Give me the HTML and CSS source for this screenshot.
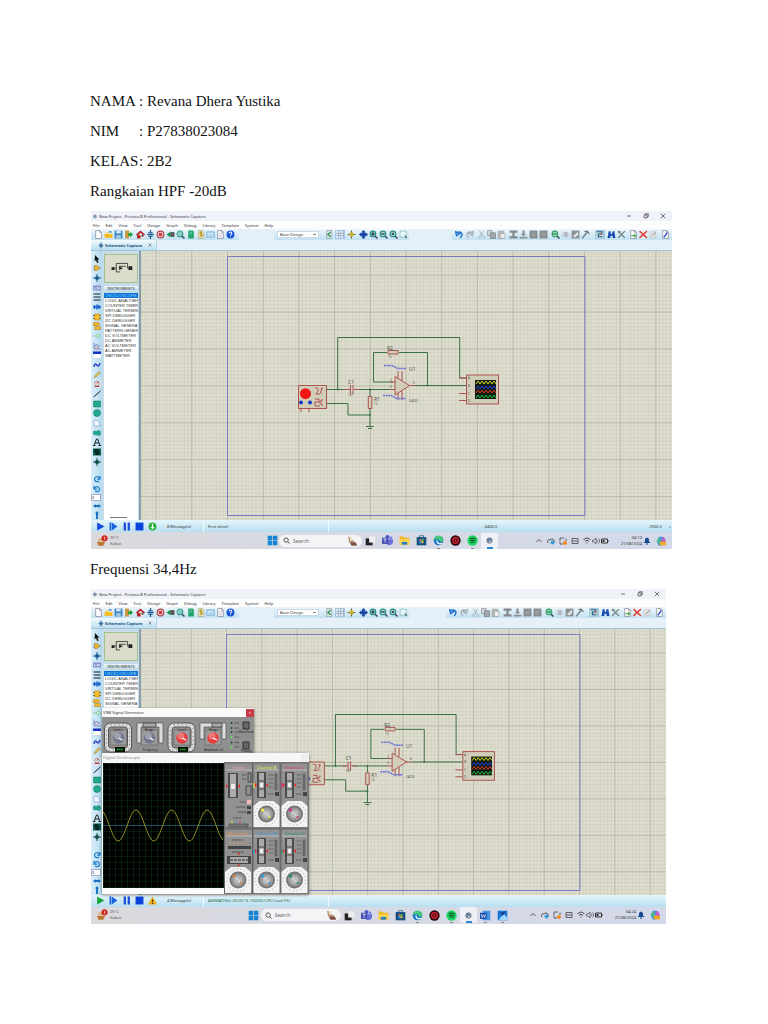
FILE: index.html
```html
<!DOCTYPE html>
<html lang="id">
<head>
<meta charset="utf-8">
<meta name="viewport" content="width=device-width, initial-scale=1">
<title>Rangkaian HPF -20dB</title>
<link rel="stylesheet" href="styles.css">
</head>
<body>
<main class="page">
  <p class="line"><span class="label">NAMA</span>: Revana Dhera Yustika</p>
  <p class="line"><span class="label">NIM</span>: P27838023084</p>
  <p class="line"><span class="label">KELAS</span>: 2B2</p>
  <p class="line">Rangkaian HPF -20dB</p>
  <figure class="shot" id="design"></figure>
  <p class="line">Frequensi 34,4Hz</p>
  <figure class="shot shot-small" id="running"></figure>
</main>
<script src="app.js"></script>
</body>
</html>
```

FILE: styles.css
```css
* { box-sizing: border-box; }
body { margin: 0; background: #fff; color: #111; font-family: "Liberation Serif", "Times New Roman", serif; }
button, input, select { font: inherit; color: inherit; border: 0; padding: 0; margin: 0; background: none; border-radius: 0; }
svg { display: block; }

.page { padding: 86px 96px 40px 90px; }
.line { margin: 0; font-size: 15px; line-height: 30px; }
.label { display: inline-block; min-width: 49px; }

.shot { margin: 5px 0 5px 1px; font: 4px/5px "Noto Sans", sans-serif; color: #333; background: #e8f2f9; overflow: hidden; }
.shot-small { margin-right: 6px; }

.titlebar { height: 10px; padding: 0 6px 0 2px; display: flex; align-items: center; gap: 2px; background: #f0f2fa; }
.titlebar svg { width: 4px; height: 5px; }
.window-buttons { margin-left: auto; display: flex; gap: 11px; }
.window-buttons svg { width: 6px; height: 6px; }

.menubar { height: 8px; padding-left: 2px; display: flex; align-items: center; gap: 6px; background: #fdfdfe; }

.toolbar { height: 11px; display: flex; align-items: center; background: #e4f0f8; }
.group { height: 11px; display: flex; align-items: center; background: linear-gradient(#edf6fc, #c3e1f2); }
.group button { width: 10px; }
.group svg { width: 9px; height: 9px; }
.group .gap { width: 2px; }
.group .wide { width: 4px; }
.group.first { padding-left: 3px; padding-right: 3px; }
.group.second { margin-left: 35px; padding: 0 0 0 3px; }
.group.third { padding-left: 6px; }
.group.last { margin-left: auto; padding-left: 3px; padding-right: 1px; }
.group .pressed { background: #d5e7f5; outline: 1px solid #a9c7de; outline-offset: -1px; }
.combo { width: 42px; height: 7px; padding: 0 2px; background: #fff; border: 1px solid #cbdbe6; appearance: none; font-size: 4px; line-height: 5px;
  background-image: linear-gradient(#888, #888); background-size: 3px 1px; background-position: right 2px center; background-repeat: no-repeat; }

.tabs { height: 11px; display: flex; align-items: end; background: #e6f0f8; border-bottom: 1px solid #9fc4da; }
.tab { height: 10px; width: 66px; padding: 0 4px 0 7px; display: flex; align-items: center; gap: 1px; color: #22507c; white-space: nowrap; background: linear-gradient(#f3fafe, #bcdff2); border-right: 1px solid #b3d4e6; }
.tab svg { width: 6px; height: 7px; flex: none; }
.tab button { margin-left: auto; }
.tab button svg { width: 4px; height: 4px; }

.workspace { position: relative; display: flex; }
.rail { width: 11px; flex: none; padding-top: 3px; display: flex; flex-direction: column; background: linear-gradient(90deg, #dceffa, #b4daee); }
.rail div { display: flex; flex-direction: column; }
.rail button { flex: 1; display: grid; place-items: center; min-height: 0; }
.rail svg { width: 8px; height: 8px; }
.rail .modes { flex: 22; margin-bottom: 8px; }
.rail .turns, .rail .flips { flex: 2; }
.rail .angle { width: 10px; height: 7px; background: #fff; border: 1px solid #aac; font-size: 4px; }

.side { width: 37px; flex: none; padding: 3px 1px 0 2px; display: flex; flex-direction: column; background: #c7dce8; }
.overview { height: 29px; flex: none; background: #dcdccb; border: 1px solid #7d8dd0; outline: 1px solid #9fc58e; outline-offset: -1px; }
.side h2 { margin: 3px 0 1px; height: 6px; font: 4px/6px "Noto Sans", sans-serif; text-align: center; background: linear-gradient(#edf6fb, #bcd8e8); flex: none; }
.parts { margin: 0; padding: 0 0 0 1px; list-style: none; flex: 1; background: #fff; white-space: nowrap; overflow: hidden; height: 0; position: relative; font-family: "Liberation Sans", sans-serif; }
.parts li { height: 5px; }
.parts .selected { margin-left: -1px; padding-left: 1px; background: #0b74d4; color: #9bd0ff; }
.parts::after { content: ""; position: absolute; left: 6px; bottom: 2px; width: 17px; height: 1px; background: #777; }

.canvas { flex: 1; min-width: 0; border-left: 2px solid #8a9fab; }
.canvas svg { width: 100%; height: auto; aspect-ratio: 531 / 269; }

.status { height: 12px; display: flex; align-items: center; background: linear-gradient(#e6f5fc, #b8def0); }
.status svg { width: 9px; height: 9px; }
.transport { display: flex; gap: 4px; padding-left: 5px; width: 76px; }
.messages { width: 36px; white-space: nowrap; }
.sheet { width: 126px; padding-left: 4px; height: 100%; display: flex; align-items: center; border-left: 1px solid #f4fbff; border-right: 1px solid #eefaff; white-space: nowrap; }
.running { color: #1d6a42; }
.coords { flex: 1; display: flex; justify-content: end; gap: 152px; padding-right: 1px; }
.coords span:last-child { margin-left: -145px; color: #3355bb; }

.taskbar { height: 17px; display: grid; grid-template-columns: 1fr auto 1fr; align-items: center; background: linear-gradient(90deg, #dadade, #d3d9ea); }
.weather { padding-left: 6px; display: flex; gap: 2px; align-items: center; line-height: 6px; color: #555; }
.weather svg { width: 11px; height: 12px; }
.apps { display: flex; align-items: center; }
.apps button { width: 17px; height: 16px; display: grid; place-items: center; border-radius: 2px; position: relative; }
.apps button svg { width: 11px; height: 11px; }
.apps .start { width: 14px; }
.apps .open::after { content: ""; position: absolute; bottom: 0; left: 7px; width: 3px; height: 1px; background: #888; }
.apps .active { background: #eef0f5; }
.apps .active svg { width: 7px; height: 7px; }
.apps .active::after { content: ""; position: absolute; bottom: 0; left: 6px; width: 6px; height: 2px; background: #2b84d4; }
.search { width: 83px; height: 12px; border-radius: 6px; background: #f4f4f7; display: flex; align-items: center; gap: 3px; padding: 0 4px; font-size: 5px; }
.shot-small .search { width: 80px; }
.search svg { width: 7px; height: 7px; flex: none; }
.search svg:last-child { width: 12px; height: 10px; }
.search input { flex: 1; width: 0; min-width: 0; outline: 0; }
.search input::placeholder { color: #666; opacity: 1; }
.tray { display: flex; justify-content: end; align-items: center; gap: 4px; padding-right: 6px; }
.tray svg { width: 8px; height: 8px; }
.tray .tight { margin-left: -3px; }
.tray time { width: 26px; text-align: right; line-height: 6px; white-space: nowrap; margin-left: 3px; margin-right: -3px; }
.tray svg.copilot { width: 10px; height: 10px; margin-left: 1px; }

.window { position: absolute; left: 11px; background: #fafafa; box-shadow: 0 1px 3px #0007; }
.window header { height: 9px; display: flex; align-items: center; justify-content: space-between; padding-left: 1px; }
.window header button { width: 8px; height: 8px; }
.window svg { width: 100%; height: auto; }
.generator { top: 79px; width: 152px; }
.generator header button { background: #c83c48; color: #fff; line-height: 7px; }
.scope { top: 124px; width: 207px; }
.scope header { color: #888; background: #f7f7f7; }
.scope header button { background: #eee; }
```

FILE: app.js
```js
const svg = (body, box = '0 0 16 16', attrs = '') => `<svg viewBox="${box}" aria-hidden="true" ${attrs}>${body}</svg>`;

const sheet = '<path d="M3 1h7l3 3v11H3z" fill="#fff" stroke="#667"/><path d="M10 1v3h3" fill="none" stroke="#667"/>';
const lens = (mark, c = '#2b8f86') => `<circle cx="7" cy="7" r="5" fill="#a9d8d4" stroke="${c}" stroke-width="2"/><path d="M11 11l4 4" stroke="#345" stroke-width="2.5"/>${mark}`;
const icons = {
  logo: '<circle cx="8" cy="8" r="6" fill="#dde9f0" stroke="#456" stroke-width="2"/><path d="M5 11V5h4a2 2 0 010 4H6" fill="none" stroke="#247" stroke-width="2"/>',
  file: sheet,
  open: '<path d="M1 7h14v7H1z" fill="#f5b820"/><path d="M3 7V4h4l1 2h5v2" fill="#fbd968"/><path d="M9 5c0-3 4-3 4 0" fill="none" stroke="#2a7bd0" stroke-width="2"/>',
  save: '<path d="M1 1h14v14H1z" fill="#3b87c4"/><path d="M4 1h8v5H4z" fill="#dcebf7"/><path d="M4 9h8v6H4z" fill="#a6c8dd"/>',
  exit: '<path d="M2 1h7v14H2z" fill="#ca963c"/><path d="M7 6h4V3l5 5-5 5v-3H7z" fill="#149b33"/>',
  home: '<path d="M2 8l6-6 6 6v7H2z" fill="#f3dfcf"/><path d="M0 8l8-7 8 7-2 2-6-5-6 5z" fill="#b81f2e"/><path d="M2 9h6v6H2z" fill="#a22"/><path d="M10 9h3v3h-3z" fill="#347"/>',
  cap: '<path d="M8 0v5M4 5h8M2 8h12M4 11h8M8 11v5" stroke="#205f91" stroke-width="2.2"/>',
  target: '<circle cx="8" cy="8" r="6" fill="none" stroke="#bb3b44" stroke-width="2"/><path d="M5 5h6v6H5z" fill="#d33"/>',
  back: '<path d="M1 8l7-5v10z" fill="#168c48"/><path d="M8 4h7v8H8z" fill="#27534b"/><path d="M10 7h4v2h-4z" fill="#e44"/>',
  view: lens('<path d="M2 2h9v9H2z" fill="#7cc8b9" opacity=".7"/>'),
  book: '<path d="M4 1h8l2 2v12H4z" fill="#21a36b"/><path d="M6 4h5M6 7h5" stroke="#9fe3c1"/>',
  money: '<path d="M4 1h8l2 2v12H4z" fill="#eee9c6" stroke="#997"/><path d="M11 4H7v3h4v4H6M9 2v11" fill="none" stroke="#b09218" stroke-width="1.5"/>',
  panel: '<path d="M1 3h14v10H1z" fill="#a9d5ef" stroke="#6fa6cf"/><path d="M3 6h10M3 9h4m3 0h3" stroke="#fff"/>',
  doc: sheet + '<path d="M5 6h6M5 9h6M5 12h6" stroke="#aab"/>',
  help: '<circle cx="8" cy="8" r="7" fill="#1451d8"/><path d="M5.5 6c0-3 5-3 5 0 0 2-2.5 1.500-2.500 4M8 11.500v1.500" fill="none" stroke="#fff" stroke-width="1.800"/>',
  redraw: '<path d="M3 1h9v14H3z" fill="#d7eadf" stroke="#789"/><path d="M10 4L5 8l5 4" fill="none" stroke="#2a8850" stroke-width="2"/>',
  grid: '<path d="M1 1h14v14H1zM1 6h14M1 10h14M6 1v14M10 1v14" fill="#eef5fb" stroke="#6c8aa5"/>',
  origin: '<path d="M8 1v14M1 8h14" stroke="#57693c" stroke-width="2"/><circle cx="8" cy="8" r="4" fill="#c9b12e"/>',
  pan: '<path d="M8 0l4 4h-2v2h2V4l4 4-4 4v-2h-2v2h2l-4 4-4-4h2v-2H4v2L0 8l4-4v2h2V4H4z" fill="#1944a5"/><path d="M5 5h6v6H5z" fill="#1944a5"/>',
  zin: lens('<path d="M4 7h6M7 4v6" stroke="#123" stroke-width="2"/>'),
  zout: lens('<path d="M4 7h6" stroke="#123" stroke-width="2"/>'),
  zall: lens('<path d="M5 5h4v4H5z" fill="#456"/>'),
  zarea: '<path d="M2 2h11v11H2z" fill="#e6f7f6" stroke="#6aa"/><path d="M10 10l4 4" stroke="#456" stroke-width="2"/>',
  undo: '<path d="M3 5c7-5 13 3 6 9M1 3l2 7 6-4z" fill="none" stroke="#2878d0" stroke-width="2.700"/>',
  redo: '<path d="M13 5C6 0 0 8 7 14M15 3l-2 7-6-4z" fill="none" stroke="#a5adb3" stroke-width="2.300"/>',
  cut: '<path d="M4 1l6 10M12 1L6 11" stroke="#9ba4aa" stroke-width="1.500"/><circle cx="4" cy="13" r="2" fill="none" stroke="#9ba4aa"/><circle cx="12" cy="13" r="2" fill="none" stroke="#9ba4aa"/>',
  copy: '<path d="M1 1h8v9H1z" fill="#d5dadd" stroke="#777"/><path d="M6 5h9v10H6z" fill="#a2a9ad" stroke="#666"/>',
  paste: '<path d="M2 2h10v13H2z" fill="#bbb" stroke="#999"/><path d="M6 6h8v9H6z" fill="#eee" stroke="#999"/>',
  bcopy: '<path d="M1 1h14v4H1zM1 11h14v4H1zM6 5h4v6H6z" fill="#85898c"/>',
  bmove: '<path d="M6 1h4v7H6zM3 7h10l-5 4zM1 12h14v3H1z" fill="#8d9194"/>',
  block: '<path d="M1 1h14v14H1z" fill="#85898c"/><path d="M4 4h8v8H4z" fill="#979b9d"/>',
  pick: lens('<path d="M4 7h6" stroke="#2a4" stroke-width="3"/>', '#3a9c6a'),
  make: '<path d="M1 5h4M1 10h4M6 4h5v8H6zM11 6h4M11 10h4" fill="#bbb" stroke="#aab"/>',
  pack: '<path d="M1 1h14v14H1z" fill="#8c9093"/><path d="M3 12L12 3l1 5-5 5z" fill="#e7e7e7"/>',
  hammer: '<path d="M2 15L11 4M6 3l5-1 4 5" fill="none" stroke="#72797e" stroke-width="2.400"/>',
  wires: '<path d="M1 1h14v14H1z" fill="#bfe2d1" stroke="#71a3cc"/><path d="M3 3h9v4H6v5h7" fill="none" stroke="#26558f" stroke-width="2"/><path d="M9 7h4" stroke="#d55" stroke-width="2"/>',
  find: '<path d="M3 2h3l1 5h2l1-5h3l2 12h-5v-4H6v4H1z" fill="#1749b0"/>',
  tools: '<path d="M2 2l12 12M14 2L2 14M2 5l4-3" stroke="#6d7c79" stroke-width="2.200"/>',
  add: sheet + '<path d="M4 10h8M9 7l3 3-3 3" fill="none" stroke="#5aad59" stroke-width="2"/>',
  del: '<path d="M4 1h9v14H4z" fill="#eee"/><path d="M1 2l13 12M14 2L1 14" stroke="#df403c" stroke-width="2.500"/>',
  up: '<path d="M2 3h10v11H2z" fill="#e4e5e7" stroke="#bbb"/><path d="M5 11l7-7" stroke="#aaa" stroke-width="2"/>',
  edit: sheet + '<path d="M5 13l6-8" stroke="#2147d0" stroke-width="2.500"/>',
  arrow: '<path d="M4 0l9 9H9l2 6-3 1-2-6-3 3z" fill="#111"/>',
  gate: '<path d="M3 3h4c8 2 8 8 0 10H3z" fill="#e7b43a" stroke="#a76e15"/><path d="M0 6h3M0 11h3M12 8h4" stroke="#357"/>',
  junction: '<path d="M8 0v16M0 8h16" stroke="#1e5d8f" stroke-width="2"/><circle cx="8" cy="8" r="4" fill="#1e5d8f"/>',
  lbl: '<path d="M0 3h16v10H0z" fill="#8792c8"/><path d="M3 10V6M3 10h3M8 6v4h3V7H8M13 6v4" stroke="#fff" fill="none"/>',
  lines: '<path d="M1 2h14M1 8h14M1 14h14" stroke="#4b6272" stroke-width="3"/>',
  bus: '<path d="M0 8h16M3 4v8M8 3v10M12 4v8" stroke="#1963cc" stroke-width="3"/>',
  chip: '<path d="M3 2h10v12H3z" fill="#f6bd2b" stroke="#aa7312"/><path d="M0 5h3M0 11h3M13 5h3M13 11h3" stroke="#8a621a" stroke-width="2"/>',
  term: '<path d="M0 1h11l3 3-3 3H0zM3 9h12v6H3z" fill="#efb62d" stroke="#a67a19"/>',
  pin: '<path d="M0 8h6l4-4 5 4-5 4-4-4" fill="#d3f1dc" stroke="#65bd81" stroke-width="1.500"/>',
  graph: '<path d="M2 1v13h13M3 10l4-6 3 5 4-3" fill="none" stroke="#6966b3" stroke-width="1.500"/><path d="M3 12l10-2" stroke="#d66"/>',
  popup: '<path d="M0 1h16v14H0z" fill="#fff" stroke="#bcc"/><path d="M0 1h16v5H0z" fill="#1730c7"/>',
  source: '<circle cx="8" cy="8" r="6" fill="#cdd9f4"/><path d="M2 12C4-4 10 20 14 4" fill="none" stroke="#2947c7" stroke-width="3"/>',
  probe: '<path d="M2 14l2-5 8-8 3 3-9 8z" fill="#ebc04f" stroke="#8b7842"/>',
  meter: '<path d="M0 0h16v16H0z" fill="#f7f7fb" stroke="#b7bbc8"/><circle cx="8" cy="7" r="5" fill="#ddd" stroke="#555"/><path d="M8 7l3-4M3 13h10" stroke="#b33" stroke-width="2"/>',
  line: '<path d="M1 14L15 2" stroke="#223" stroke-width="2"/>',
  box: '<path d="M1 2h14v12H1z" fill="#20a98b" stroke="#137560"/>',
  circle: '<circle cx="8" cy="8" r="7" fill="#20a98b" stroke="#137560"/>',
  arc: '<path d="M2 2c8 0 12 6 12 12H2z" fill="#eef5ff" stroke="#6d83c3"/>',
  path: '<path d="M1 5c3-3 6 1 8-1s6-1 6 4-3 6-6 4-8 1-8-2z" fill="#20a98b" stroke="#137560"/>',
  text: '<path d="M2 15l5-13h2l5 13M4 10h8M0 15h5M11 15h5" fill="none" stroke="#222" stroke-width="2"/>',
  symbol: '<path d="M0 1h16v14H0z" fill="#115b4e"/><path d="M11 4H5v4h6v4H5" fill="none" stroke="#061f1d" stroke-width="3"/>',
  marker: '<path d="M8 0v16M0 8h16" stroke="#124a42" stroke-width="2"/><circle cx="8" cy="8" r="4" fill="#124a42"/>',
  cw: '<path d="M12 12C5 17 0 8 6 4c3-2 6 0 7 3M14 2v6H8" fill="none" stroke="#1f80c9" stroke-width="2.500"/>',
  ccw: '<path d="M4 12c7 5 12-4 6-8-3-2-6 0-7 3M2 2v6h6" fill="none" stroke="#1f80c9" stroke-width="2.500"/>',
  horiz: '<path d="M0 8l5-4v2h6V4l5 4-5 4v-2H5v2z" fill="#1f72bd"/>',
  vert: '<path d="M8 0l4 5h-2v11H6V5H4z" fill="#1f72bd"/>',
  play: '<path d="M2 1l13 7-13 7z" fill="#1749dc"/>',
  playing: '<path d="M2 1l13 7-13 7z" fill="#1aa43c"/>',
  step: '<path d="M1 1h3v14H1zM5 1l10 7-10 7z" fill="#1763dc"/>',
  pause: '<path d="M3 1h4v14H3zM10 1h4v14h-4z" fill="#1749dc"/>',
  stop: '<path d="M1 1h14v14H1z" fill="#0b43df"/>',
  info: '<circle cx="8" cy="8" r="7" fill="#2eb43c"/><path d="M7 3h2v6h3l-4 4-4-4h3z" fill="#fff"/>',
  warn: '<path d="M8 1l8 14H0z" fill="#efae13"/><path d="M8 6v4M8 12v2" stroke="#422" stroke-width="2"/>',
  fog: '<path d="M0 9h12l-3 6H2z" fill="#bc7732"/><path d="M1 7c3-5 8-2 9 1" fill="#e3a758"/><circle cx="11" cy="4" r="4.500" fill="#ce2c22"/><path d="M11 2v4" stroke="#fff"/>',
  win: '<path d="M1 1h6.500v6.500H1zM8.500 1H15v6.500H8.500zM1 8.500h6.500V15H1zM8.500 8.500H15V15H8.500z" fill="#1685d3"/>',
  search: '<circle cx="7" cy="7" r="5" fill="none" stroke="#333" stroke-width="1.800"/><path d="M11 11l4 4" stroke="#333" stroke-width="2"/>',
  bird: '<path d="M2 1l4 1 1 4 7 4 2 5H7L3 9z" fill="#a88568"/><path d="M4 1h3l2 5-4 3z" fill="#f1dfc5"/><path d="M6 11h8l2 4H7z" fill="#784c47"/>',
  desk: '<path d="M1 5h10v10H1z" fill="#222"/><path d="M6 2h9v9H6z" fill="#eee"/>',
  teams: '<circle cx="8" cy="3" r="3" fill="#5059c9"/><circle cx="13" cy="4" r="2" fill="#7b83eb"/><path d="M5 6h11v5c-2 5-8 5-10 1z" fill="#6972d8"/><path d="M0 4h9v9H0z" fill="#4950b5"/><path d="M2 6h5M4.500 6v5" stroke="#fff"/>',
  folder: '<path d="M1 2h5l2 2h7v10H1z" fill="#f2b71e"/><path d="M1 6h14v8H1z" fill="#ffd44f"/><path d="M4 10h8v4H4z" fill="#267fc6"/>',
  store: '<path d="M1 3h14v12H1z" fill="#174f83"/><path d="M5 3V1h6v2" fill="none" stroke="#174f83"/><path d="M5 6h3v3H5z" fill="#e64"/><path d="M8 6h3v3H8z" fill="#6b4"/><path d="M5 9h3v3H5z" fill="#3ae"/><path d="M8 9h3v3H8z" fill="#eb3"/>',
  edge: '<circle cx="8" cy="8" r="7" fill="#1678c8"/><path d="M1 8c0-9 14-9 14-1 0 4-5 3-5 2 0-3-7-4-9-1z" fill="#46c77b"/><path d="M6 8c-1 4 3 6 7 4" fill="none" stroke="#fff" stroke-width="2"/>',
  music: '<circle cx="8" cy="8" r="7.500" fill="#27090c"/><circle cx="8" cy="8" r="4" fill="none" stroke="#d91f32" stroke-width="2"/><path d="M7 6l3 2-3 2z" fill="#f34"/>',
  spot: '<circle cx="8" cy="8" r="7.500" fill="#1ed760"/><path d="M4 5c3-1 6-1 9 1M4 8c3-1 5-1 8 1M5 11c2-1 4-1 6 0" fill="none" stroke="#0b5025" stroke-width="1.500"/>',
  word: '<path d="M4 1h11v14H4z" fill="#4895e5"/><path d="M0 4h10v9H0z" fill="#174faa"/><path d="M2 6l1 5 2-4 2 4 1-5" fill="none" stroke="#fff"/>',
  photo: '<path d="M1 1h14v14H1z" fill="#1b75d1"/><path d="M2 14l8-8 5 5v4z" fill="#9fdcff"/><path d="M4 4l8-2-3 6z" fill="#14448d"/>',
  up2: '<path d="M3 10l5-5 5 5" fill="none" stroke="#333" stroke-width="1.500"/>',
  cloud: '<path d="M2 12c-3-4 1-8 4-6 4-5 10 0 8 5" fill="none" stroke="#444" stroke-width="2"/><circle cx="11" cy="11" r="4" fill="#3c9add"/>',
  sync: '<path d="M2 8V2h8M14 8V3M2 14h6M2 14V9" fill="none" stroke="#555" stroke-width="1.800"/><circle cx="12" cy="12" r="4" fill="#f28b1c"/>',
  kb: '<path d="M2 3h12v10H2zM2 8h12" fill="none" stroke="#555" stroke-width="1.800"/>',
  wifi: '<path d="M1 6c4-5 10-5 14 0M4 9c3-3 5-3 8 0M8 13v-2" fill="none" stroke="#444" stroke-width="2"/>',
  sound: '<path d="M1 6h3l4-4v12l-4-4H1zM10 5c2 2 2 4 0 6M13 3c3 3 3 7 0 10" fill="none" stroke="#555" stroke-width="1.500"/>',
  battery: '<path d="M1 4h12v8H1zM14 6v4" fill="none" stroke="#333" stroke-width="2"/><path d="M3 6h4v4H3z" fill="#333"/>',
  bell: '<path d="M1 12l3-3V5c1-5 7-5 8 0v4l3 3zM6 13h4v2H6z" fill="#174b91"/>',
  copilot: '<path d="M5 1h6l3 7-4 7H4L1 8z" fill="#3c94dd"/><path d="M1 8l4-7 3 6-3 5z" fill="#4ab98f"/><path d="M9 2h4l3 6-3 5-4-4z" fill="#c05fc6"/><path d="M6 9h10v6H6z" fill="#eda923"/>',
  min: '<path d="M3 8h10" stroke="#444" stroke-width="2"/>',
  max: '<path d="M3 5h8v8H3zM6 5V2h8v8h-3" fill="none" stroke="#444" stroke-width="2"/>',
  close: '<path d="M2 2l12 12M14 2L2 14" stroke="#444" stroke-width="2"/>'
};
const icon = (name, cls = '') => svg(icons[name], '0 0 16 16', cls && `class="${cls}"`);
const btn = (name, cls = '') => `<button type="button" aria-label="${name}" ${cls && `class="${cls}"`}>${icon(name)}</button>`;
const bar = names => names.split(' ').map(n => n === '|' ? '<span class="gap"></span>' : n === '||' ? '<span class="wide"></span>' : n[0] === '*' ? btn(n.slice(1), 'pressed') : btn(n)).join('');

const wave = (y, color) => `<path d="M476 ${y}l2-3 2 3 2-3 2 3 2-3 2 3 2-3 2 3 2-3 2 3" fill="none" stroke="${color}"/>`;
const circuit = id => svg(`
  <defs>
    <pattern id="minor${id}" width="3.57" height="3.69" x="191.3" y="274.7" patternUnits="userSpaceOnUse"><path d="M0 0H3.57M0 0V3.69" stroke="#c8c9b9" stroke-width=".9"/></pattern>
    <pattern id="major${id}" width="35.7" height="36.9" x="191.3" y="274.7" patternUnits="userSpaceOnUse"><path d="M0 .5H35.7M.5 0V36.9" stroke="#b3b4a5" stroke-width=".8"/></pattern>
  </defs>
  <path d="M141 251h531v269H141z" fill="#deddce"/>
  <path d="M141 251h531v269H141z" fill="url(#minor${id})"/>
  <path d="M141 251h531v269H141z" fill="url(#major${id})"/>
  <path d="M227.500 256.500h357.500v259H227.500z" fill="none" stroke="#7a79c4"/>
  <g fill="none" stroke="#3d7046">
    <path d="M327 389.500h22M337.700 389.500v-52h122v40.500h7M355 389.500h35M393 382h-19.500v-29.500H387M399 352.500h28.500v33M415 385.500h51M327 403.500h21v11.500h22M370 389v7M370 409v17M366 426.500h8M368 428.500h4"/>
  </g>
  <g fill="#3d7046"><circle cx="337.700" cy="389.500" r="1"/><circle cx="370" cy="389.500" r="1"/><circle cx="427.500" cy="385.500" r="1"/><circle cx="370" cy="415" r="1"/></g>
  <g fill="#d2cdb8" stroke="#ab5350">
    <path d="M298.500 385.500h28v23h-28zM388 350.500h10v3.500h-10zM368.300 396.500h3.500v12h-3.500zM395 376.500v18.500l14.500-9.500z"/>
    <path d="M466.500 375h32v29h-32z"/>
    <path d="M350.500 385v9M353 385v9M345 389.500h5M354 389.500h5M390 382h5M390 389.500h5M409 385.500h6M398 371v7M402 371v9M398 393v7M402 391v9M301 408v4M309 408v4M459 378h7M459 393.500h7M459 400.500h7" fill="none"/>
    <path d="M315 388c4-1 4 3 1 6h4M322 394l-2-2 2-2-1-2 2 1M315 399h4v3h-4v4h5M322 406v-2h-2v-3h2v-2" fill="none"/>
  </g>
  <circle cx="305.500" cy="393.700" r="5.500" fill="#f51414"/><circle cx="301" cy="402.500" r="2" fill="#1739c8"/><circle cx="310" cy="402.500" r="2" fill="#1739c8"/>
  <path d="M475 380h21v19h-21z" fill="#0d1b12"/>
  ${wave(384, '#d6da25')}${wave(389, '#2940e0')}${wave(393, '#df3a2c')}${wave(398, '#22b93c')}
  <g fill="#444" font-size="5" font-family="Open Sans, sans-serif"><text x="387" y="350">R2</text><text x="409" y="371">U1</text><text x="348" y="384">C1</text><text x="374" y="401">R1</text></g>
  <g fill="#444" font-size="3" font-family="Open Sans, sans-serif"><text x="388" y="358">1k</text><text x="374" y="405">1k</text><text x="348" y="396">1uF</text><text x="409" y="402">UA741</text><text x="468" y="379">A</text><text x="468" y="387">B</text><text x="468" y="395">C</text><text x="468" y="402">D</text><text x="390" y="381">2</text><text x="390" y="388">3</text><text x="413" y="384">6</text></g>
  <path d="M384 365.500h8l6 3h8M383 395.500h8l6 3h9" fill="none" stroke="#6d70d8" stroke-width="1.500" stroke-dasharray="2 .6"/>`,
  '141 251 531 269', 'preserveAspectRatio="none"');

const overview = svg('<path d="M8 14h4v-5h12v5h4M12 14v4h4M15 12h7" fill="none" stroke="#444"/><path d="M7 13h3v3H7zM25 12h4v4h-4zM15 12l4 2-4 2z" fill="#222"/>', '0 0 34 28');

const dial = (x, y, c) => `<g><path d="M${x - 13} ${y - 8}l6-5h14l6 5v21h-26z" fill="#f2f2f2"/><circle cx="${x}" cy="${y}" r="11" fill="none" stroke="#777" stroke-dasharray=".6 3"/><circle cx="${x}" cy="${y}" r="8.500" fill="#777"/><circle cx="${x}" cy="${y}" r="6.500" fill="#9a9a9a"/><circle cx="${x}" cy="${y}" r="4" fill="#b9b9b9"/><path d="M${x - 2} ${y - 2}l4 4" stroke="#eee"/><circle cx="${x - 4}" cy="${y - 4}" r="1.500" fill="${c}"/><circle cx="${x + 3}" cy="${y + 3}" r="1" fill="${c}"/></g>`;
const channel = (x, y, name, c) => `<path d="M${x} ${y}h27v65h-27z" fill="#929292" stroke="#555" stroke-width=".7"/><path d="M${x + 1} ${y + 7}h25" stroke="#bbb"/><text x="${x + 4}" y="${y + 6}" fill="${c}">${name}</text>
  <path d="M${x + 4} ${y + 9}h9v26h-9z" fill="#4c4c4c"/><path d="M${x + 6} ${y + 10}h5v24h-5z" fill="#aaa"/><path d="M${x + 6} ${y + 18}h5M${x + 6} ${y + 26}h5" stroke="#444"/><path d="M${x + 7} ${y + 20}h3v4h-3z" fill="#eee"/><path d="M${x + 2} ${y + 20}l2 2-2 2zM${x + 15} ${y + 20}l-2 2 2 2z" fill="#e22"/><path d="M${x + 1} ${y + 20}v5" stroke="${c}"/>
  <path d="M${x + 22} ${y + 11}h2v16h-2z" fill="#777" stroke="#444" stroke-width=".5"/><path d="M${x + 16} ${y + 12}h4M${x + 16} ${y + 16}h4M${x + 16} ${y + 20}h4M${x + 16} ${y + 24}h4M${x + 15} ${y + 31}h6" stroke="#555" stroke-dasharray="1 .4"/><path d="M${x + 22} ${y + 29}h4v4h-4z" fill="#444"/>${dial(x + 13.5, y + 51, c)}`;

const sine = () => {
  let d = '';
  for (let x = 103; x <= 223; x++) d += `${d ? 'L' : 'M'}${x} ${(825.5 - 15.5 * Math.cos((x - 136) / 35.6 * 2 * Math.PI)).toFixed(1)}`;
  return d;
};
const scopeBody = () => svg(`
  <defs><pattern id="trace" x="103" y="763" width="6" height="6.200" patternUnits="userSpaceOnUse"><path d="M0 0h6M0 0v6.200" stroke="#12391b"/></pattern></defs>
  <path d="M102 762h207v132H102z" fill="#8c8c8c"/><path d="M102 762h122v132H102z" fill="#fafafa"/>
  <path d="M103 763h121v125H103z" fill="#000"/><path d="M103 763h121v125H103z" fill="url(#trace)"/>
  <path d="M103 825.500h121" stroke="#1d5566"/><path d="${sine()}" fill="none" stroke="#918c25"/>
  <g font-size="4" font-family="Open Sans, sans-serif">
  <path d="M224.500 763h28v65h-28zM224.500 829h28v64h-28z" fill="#929292" stroke="#555" stroke-width=".7"/>
  <text x="232" y="769" fill="#f3a4b0">Trigger</text><text x="227" y="835" fill="#ff8c2a">Horizontal</text>
  <path d="M226 770h26M226 836h26" stroke="#bbb"/>
  <path d="M228 773h10v25h-10z" fill="#4c4c4c"/><path d="M230 774h6v23h-6z" fill="#aaa"/><path d="M231 784h4v5h-4z" fill="#eee"/><path d="M226 784l2 2-2 2zM240 784l-2 2 2 2z" fill="#e22"/>
  <path d="M248 773h3v9h-3zM246 786h5v9h-5z" fill="none" stroke="#444"/><path d="M247 800h4v4h-4z" fill="#f0bcbc"/><path d="M247 806h4v3h-4zM247 811h4v3h-4z" fill="#444"/><path d="M242 775h4M242 779h4M240 802h6M236 807h10M238 812h8M233 818h8" stroke="#444" stroke-dasharray="1 .4"/>
  <path d="M229 824h19v3h-19z" fill="#777" stroke="#444" stroke-width=".6"/><path d="M231 822h2" stroke="#ee3"/><path d="M235 822h2" stroke="#39f"/><path d="M239 822h2" stroke="#e3a"/><path d="M243 822h2" stroke="#3b6"/>
  <path d="M232 840h11M232 852h12" stroke="#444" stroke-dasharray="1 .4"/><path d="M229 843h20" stroke="#d95" stroke-dasharray="2 2"/><path d="M228 846h23v3h-23z" fill="#444"/><path d="M227 856h24v8h-24z" fill="#444"/><path d="M230 857h18v6h-18z" fill="#aaa"/><path d="M230 860h18" stroke="#333" stroke-dasharray="3 1"/><path d="M237 853h3l-1 2zM237 866h3l-1-2z" fill="#e22"/>
  ${dial(238, 880, '#e58434')}
  ${channel(253, 763, 'Channel A', '#fff830')}${channel(281, 763, 'Channel C', '#e8208c')}${channel(253, 829, 'Channel B', '#1aa0f5')}${channel(281, 829, 'Channel D', '#109a5a')}</g>`, '102 762 207 132');

const knob = (x, c) => `<path d="M${x - 8} 729h16v15h-16z" fill="#9b9b9b" stroke="#666" stroke-width=".6"/><circle cx="${x}" cy="737" r="5.700" fill="${c}"/><circle cx="${x - 1}" cy="735" r="3.500" fill="#fff" opacity=".3"/><path d="M${x} 737l4 2" stroke="#fff" stroke-width="1.300"/>`;
const ring = x => `<rect x="${x - 14}" y="722" width="27" height="29" rx="6" fill="#ddd" stroke="#555"/><rect x="${x - 10}" y="726" width="19" height="21" rx="3" fill="#8f8f8f" stroke="#555"/><rect x="${x - 12}" y="724" width="23" height="25" rx="4" fill="none" stroke="#777" stroke-dasharray="1 3"/>`;
const leds = [722, 727, 731, 736, 741.5, 746].map((y, i) => `<circle cx="231.500" cy="${y}" r="1" fill="${i === 3 || i === 5 ? '#4df04d' : '#14501e'}"/><path d="M235 ${y}h4" stroke="#444" stroke-dasharray="1 .4"/>`).join('');
const generatorBody = () => svg(`
  <path d="M102 716h152v38H102z" fill="#8f8f8f"/>
  ${ring(118.5)}${ring(182)}
  <path d="M137 742v-20h26v20h-4v-16h-18v16zM200 738v-16h26v16h-4v-12h-18v12z" fill="#ddd" stroke="#555" stroke-width=".7"/>
  <path d="M143 722h13v4h-13zM212 722h10v4h-10z" fill="#aaa" stroke="#555"/>
  ${knob(118.5, '#70768b')}${knob(149.5, '#70768b')}${knob(182, '#e63c3c')}${knob(213, '#e63c3c')}
  <path d="M115 746h10v5h-10zM178 746h10v5h-10z" fill="#061306"/><path d="M117 748.500h6M180 748.500h6" stroke="#1fb52a" stroke-width="1.500" stroke-dasharray="1.500 .6"/>
  ${leds}<path d="M243 721h6v7h-6zM243 741h6v7h-6z" fill="#666" stroke="#333"/>
  <g font-size="3" font-family="Open Sans, sans-serif" fill="#111"><text x="143" y="750">Frequency</text><text x="204" y="750">Amplitude Lvl</text><text x="239" y="732">Waveform</text><text x="241" y="751">Polarity</text><text x="113" y="730">Centre</text><text x="145" y="730">Range</text><text x="178" y="730">Level</text><text x="209" y="730">Range</text></g>`, '102 716 152 38');

const windows = `
  <section class="window generator"><header>VSM Signal Generator<button type="button" aria-label="Close">×</button></header>${generatorBody()}</section>
  <section class="window scope"><header>Digital Oscilloscope<button type="button" aria-label="Close"></button></header>${scopeBody()}</section>`;

const menus = ['File', 'Edit', 'View', 'Tool', 'Design', 'Graph', 'Debug', 'Library', 'Template', 'System', 'Help'];
const parts = ['OSCILLOSCOPE', 'LOGIC ANALYSER', 'COUNTER TIMER', 'VIRTUAL TERMIN', 'SPI DEBUGGER', 'I2C DEBUGGER', 'SIGNAL GENERA', 'PATTERN GENER', 'DC VOLTMETER', 'DC AMMETER', 'AC VOLTMETER', 'AC AMMETER', 'WATTMETER'];

function screen(id, o) {
  document.getElementById(id).innerHTML = `
  <div class="titlebar">${icon('logo')}<span>New Project - Proteus 8 Professional - Schematic Capture</span><div class="window-buttons">${bar('min max close')}</div></div>
  <nav class="menubar">${menus.map(m => `<button type="button">${m}</button>`).join('')}</nav>
  <div class="toolbar">
    <div class="group first">${bar('file open save exit | home cap target back view book money panel doc help')}</div>
    <div class="group second"><select class="combo" aria-label="Design variant"><option>Base Design</option></select></div>
    <div class="group third">${bar('redraw *grid | origin | pan zin zout zall zarea')}</div>
    <div class="group last">${bar('undo redo | cut copy paste | bcopy bmove block block | pick make pack hammer || *wires | find tools | add del up | edit')}</div>
  </div>
  <div class="tabs"><div class="tab">${icon('cap')}<b>Schematic Capture</b>${btn('close')}</div></div>
  <div class="workspace">
    <div class="rail"><div class="modes">${bar('arrow gate junction lbl lines bus chip term pin graph popup source probe meter line box circle arc path text symbol marker')}</div>
      <div class="turns">${bar('cw ccw')}</div><input class="angle" aria-label="Angle" value="0"><div class="flips">${bar('horiz vert')}</div></div>
    <div class="side"><div class="overview">${overview}</div><h2>INSTRUMENTS</h2>
      <ul class="parts">${parts.slice(0, o.rows).map((p, i) => `<li${i ? '' : ' class="selected"'}>${p}</li>`).join('')}</ul></div>
    <div class="canvas">${circuit(id)}</div>${o.windows}
  </div>
  <div class="status"><div class="transport">${bar(o.transport)}</div><span class="messages">${o.messages}</span><span class="sheet ${o.live}">${o.sheet}</span>${o.coords}</div>
  <div class="taskbar">
    <div class="weather">${icon('fog')}<span>25°C<br>Kabut</span></div>
    <div class="apps">${btn('win', 'start')}<label class="search">${icon('search')}<input type="text" placeholder="Search" aria-label="Search">${icon('bird')}</label>${bar('desk teams folder store')}${btn('edge', 'open')}${btn('music')}${btn('spot', 'open')}${btn('logo', 'active')}${o.apps}</div>
    <div class="tray">${['up2', 'cloud', 'sync', 'kb', 'wifi'].map(n => icon(n)).join('')}${icon('sound', 'tight')}${icon('battery', 'tight')}<time>${o.time}<br>21/08/2024</time>${icon('bell')}${icon('copilot', 'copilot')}</div>
  </div>`;
}

screen('design', { rows: 13, windows: '', transport: 'play step pause stop info', messages: '8 Message(s)', sheet: 'First sheet!', live: '', coords: '<div class="coords"><span>-3400.0</span><span>2500.0</span><span>+</span></div>', apps: '', time: '04:10' });
screen('running', { rows: 7, windows, transport: 'playing step pause stop warn', messages: '4 Message(s)', sheet: 'ANIMATING: 00:00:13.750000 (CPU load 5%)', live: 'running', coords: '', apps: btn('word', 'open') + btn('photo', 'open'), time: '04:24' });
```
